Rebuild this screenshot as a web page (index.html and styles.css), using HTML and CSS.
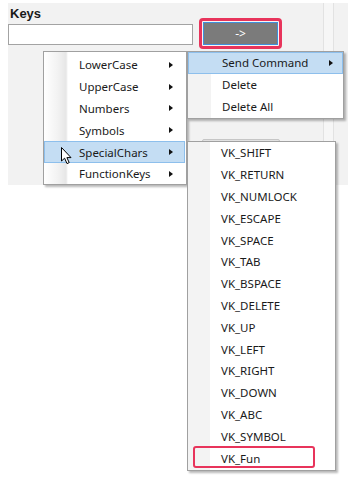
FILE: index.html
```html
<!DOCTYPE html>
<html>

<head>
  <link rel="stylesheet" href="styles.css">
</head>

<body>
  <div class="panel">
    <div class="form">
      <div class="label">Keys</div>
      <div class="key-row">
        <div class="key-input"></div>
        <div class="focus-ring">
          <button class="send-btn">-&gt;</button>
        </div>
      </div>
      <div class="hidden-btn"></div>
    </div>
    <div class="strip"></div>
  </div>

  <!-- category menu -->
  <div class="menu menu-keys">
    <div class="item"><span>LowerCase</span><i class="arrow"></i></div>
    <div class="item"><span>UpperCase</span><i class="arrow"></i></div>
    <div class="item"><span>Numbers</span><i class="arrow"></i></div>
    <div class="item"><span>Symbols</span><i class="arrow"></i></div>
    <div class="item active"><span>SpecialChars</span><i class="arrow"></i></div>
    <div class="item"><span>FunctionKeys</span><i class="arrow"></i></div>
  </div>

  <!-- context menu -->
  <div class="menu menu-ctx">
    <div class="item active"><span>Send Command</span><i class="arrow"></i></div>
    <div class="item"><span>Delete</span></div>
    <div class="item"><span>Delete All</span></div>
  </div>

  <!-- special chars submenu -->
  <div class="menu menu-sub">
    <div class="item"><span>VK_SHIFT</span></div>
    <div class="item"><span>VK_RETURN</span></div>
    <div class="item"><span>VK_NUMLOCK</span></div>
    <div class="item"><span>VK_ESCAPE</span></div>
    <div class="item"><span>VK_SPACE</span></div>
    <div class="item"><span>VK_TAB</span></div>
    <div class="item"><span>VK_BSPACE</span></div>
    <div class="item"><span>VK_DELETE</span></div>
    <div class="item"><span>VK_UP</span></div>
    <div class="item"><span>VK_LEFT</span></div>
    <div class="item"><span>VK_RIGHT</span></div>
    <div class="item"><span>VK_DOWN</span></div>
    <div class="item"><span>VK_ABC</span></div>
    <div class="item"><span>VK_SYMBOL</span></div>
    <div class="item marked"><span>VK_Fun</span></div>
  </div>

  <svg class="cursor" width="12" height="18" viewBox="0 0 12 18">
    <path d="M0.5 0.5 L0.5 14 L3.6 11.2 L6 16.6 L8.2 15.6 L5.9 10.6 L10 10.6 Z" fill="#fff" stroke="#000" stroke-width="1" stroke-linejoin="round" />
  </svg>
</body>

</html>
```

FILE: styles.css
```css
:root {
  --panel-bg: #f2f2f2;
  --menu-border: #a0a0a0;
  --menu-text: #1a1a1a;
  --gutter-bg: #f3f3f3;
  --hover-bg: #c4ddf3;
  --hover-border: #8dbfec;
  --mark-color: #e8345b;
}

body {
  margin: 0;
  background: #ffffff;
  font-family: 'Noto Sans', 'Open Sans', sans-serif;
  color: var(--menu-text);
}

.panel {
  display: flex;
  margin: 3px 0 0 8px;
  height: 182px;
  background: var(--panel-bg);
}

.form {
  width: 315px;
}

.strip {
  width: 9px;
  background: #f6f6f6;
  border-left: 1px solid #e2e2e2;
  border-right: 1px solid #e2e2e2;
}

.label {
  margin: 3px 0 0 2px;
  font-family: 'Liberation Sans', Arial, sans-serif;
  font-weight: bold;
  font-size: 13px;
  line-height: 15px;
  color: #1a1a1a;
}

.key-row {
  display: flex;
  align-items: flex-start;
  margin-top: -3px;
}

.key-input {
  width: 185px;
  height: 21px;
  margin-top: 6px;
  box-sizing: border-box;
  background: #ffffff;
  border: 1px solid #a3a3a3;
}

.focus-ring {
  margin-left: 6px;
  width: 83px;
  height: 31px;
  box-sizing: border-box;
  padding: 1px;
  border: 3px solid var(--mark-color);
  border-radius: 4px;
  background: #f7f7f7;
}

.send-btn {
  display: block;
  width: 100%;
  height: 100%;
  margin: 0;
  padding: 0;
  border: 1px solid #3f8fdc;
  background: #7b7b7b;
  color: #ffffff;
  font-family: 'Noto Sans', sans-serif;
  font-size: 12px;
}

.hidden-btn {
  width: 78px;
  height: 22px;
  margin: 90px 0 0 194px;
  box-sizing: border-box;
  background: #e1e1e1;
  border: 1px solid #c6c6c6;
  border-radius: 2px;
}

/* popup menus sit over the form */
.menu {
  position: absolute;
  box-sizing: border-box;
  background: #ffffff;
  border: 1px solid var(--menu-border);
  box-shadow: 2px 2px 2px rgba(0, 0, 0, 0.28);
  font-size: 11.5px;
}

.menu-keys {
  left: 43px;
  top: 51px;
  width: 144px;
  height: 134px;
  padding: 2px 1px 0 0;
  background: linear-gradient(to right, #ffffff 0, #f2f2f2 14px, #e6e6e6 22px, #ffffff 24px);
}

.menu-ctx {
  left: 187px;
  top: 51px;
  width: 157px;
  height: 68px;
  background: linear-gradient(to right, var(--gutter-bg) 23px, #ffffff 23px);
}

.menu-sub {
  left: 187px;
  top: 141px;
  width: 149px;
  height: 330px;
  background: linear-gradient(to right, var(--gutter-bg) 22px, #ffffff 22px);
}

.item {
  position: relative;
  display: flex;
  align-items: center;
  justify-content: space-between;
  height: 21.8px;
  box-sizing: border-box;
  padding: 0 11px 0 34px;
  border: 1px solid transparent;
  white-space: nowrap;
}

.menu-ctx .item {
  padding: 0 9px 0 33px;
}

.menu-sub .item {
  padding-left: 32px;
}

.item.active {
  background: var(--hover-bg);
  border-color: var(--hover-border);
}

.arrow {
  width: 0;
  height: 0;
  border-top: 3.5px solid transparent;
  border-bottom: 3.5px solid transparent;
  border-left: 4px solid #111111;
}

.item.marked::after {
  content: "";
  position: absolute;
  left: 4px;
  right: 19px;
  top: -2px;
  bottom: 0;
  border: 2px solid var(--mark-color);
  border-radius: 3px;
}

.cursor {
  position: absolute;
  left: 61px;
  top: 147px;
}
```
